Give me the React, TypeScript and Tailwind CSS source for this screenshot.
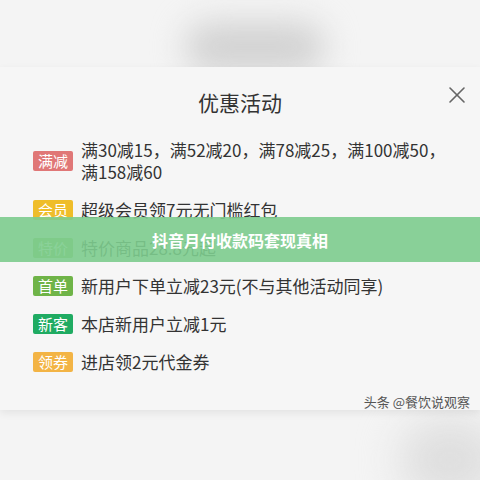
import { X } from "lucide-react";

/** 单条优惠 */
interface Promo {
    tag: string;
    color: string;
    lines: string[];
}

const promos: Promo[] = [
    { tag: "满减", color: "bg-[#e07777]", lines: ["满30减15，满52减20，满78减25，满100减50，", "满158减60"] },
    { tag: "会员", color: "bg-[#efbd2a]", lines: ["超级会员领7元无门槛红包"] },
    { tag: "特价", color: "bg-[#8cc35a]", lines: ["特价商品28.8元起"] },
    { tag: "首单", color: "bg-[#6fb448]", lines: ["新用户下单立减23元(不与其他活动同享)"] },
    { tag: "新客", color: "bg-[#1fab62]", lines: ["本店新用户立减1元"] },
    { tag: "领券", color: "bg-[#f3b445]", lines: ["进店领2元代金券"] },
];

function PromoRow({ tag, color, lines }: Promo) {
    return (
        <div className="flex items-center gap-2">
            <span className={`${color} w-10 h-5 shrink-0 rounded-[2px] text-white text-[15px] leading-5 text-center`}>
                {tag}
            </span>
            <div className="text-[17px] leading-[22px] text-[#333]">
                {lines.map((l) => (
                    <div key={l}>{l}</div>
                ))}
            </div>
        </div>
    );
}

export default function App() {
    return (
        <div
            className="relative w-[480px] h-[480px] overflow-hidden bg-[#f4f4f4] flex flex-col"
            style={{ fontFamily: '"Noto Sans CJK SC", "Noto Sans", sans-serif' }}
        >
            {/* 顶部模糊阴影 */}
            <div className="absolute left-[185px] top-[22px] w-[140px] h-[50px] rounded-full bg-[#d2d2d2] blur-[16px]" />
            <div className="absolute right-[-20px] bottom-[-20px] w-[100px] h-[80px] rounded-full bg-[#dedede] blur-[20px]" />

            <div className="h-[67px] shrink-0" />

            {/* 弹窗卡片 */}
            <div className="relative z-10 h-[343px] shrink-0 bg-[#f6f6f6] shadow-[0_3px_8px_rgba(0,0,0,0.07)] flex flex-col">
                <div className="relative h-[72px] flex items-center justify-center">
                    <span className="text-[21px] text-[#333]">优惠活动</span>
                    <X className="absolute right-[9px] top-[14px] w-7 h-7 text-[#666]" strokeWidth={1.4} />
                </div>
                <div className="flex flex-col gap-4 pl-[33px]">
                    {promos.map((p) => (
                        <PromoRow key={p.tag} {...p} />
                    ))}
                </div>
                <div className="mt-auto self-end pr-[10px] text-[13px] leading-4 text-[#555]">头条 @餐饮说观察</div>
            </div>

            {/* 标题横幅 */}
            <div className="absolute z-20 left-0 right-0 top-[217px] h-[45px] bg-[#7dcc8e]/90 flex items-center justify-center">
                <span className="text-white text-[16px] font-bold">抖音月付收款码套现真相</span>
            </div>
        </div>
    );
}
